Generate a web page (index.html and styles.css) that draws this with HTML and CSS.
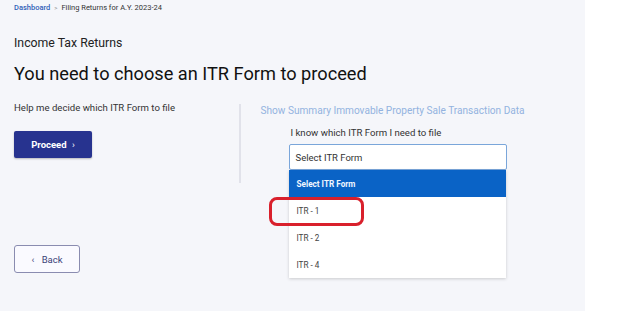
FILE: index.html
```html
<!DOCTYPE html>
<html>
<head>
<meta charset="utf-8">
<link rel="stylesheet" href="styles.css">
</head>
<body>
<div class="page">
  <div class="crumbs"><span class="crumb-link">Dashboard</span><span class="crumb-sep">&gt;</span><span class="crumb-cur">Filing Returns for A.Y. 2023-24</span></div>
  <div class="subtitle">Income Tax Returns</div>
  <h1 class="title">You need to choose an ITR Form to proceed</h1>
  <div class="cols">
    <div class="col-left">
      <div class="help">Help me decide which ITR Form to file</div>
      <button class="btn-primary">Proceed <span class="chev">›</span></button>
    </div>
    <div class="divider"></div>
    <div class="col-right">
      <div class="summary-link">Show Summary Immovable Property Sale Transaction Data</div>
      <div class="select-wrap">
        <div class="know">I know which ITR Form I need to file</div>
        <div class="select">Select ITR Form</div>
        <div class="menu">
          <div class="opt active">Select ITR Form</div>
          <div class="opt">ITR - 1</div>
          <div class="opt">ITR - 2</div>
          <div class="opt">ITR - 4</div>
          <div class="mark"></div>
        </div>
      </div>
    </div>
  </div>
  <button class="btn-back"><span class="chev-back">‹</span> Back</button>
</div>
</body>
</html>
```
FILE: styles.css
```css
html, body {
  margin: 0;
  padding: 0;
  background: #ffffff;
  font-family: Roboto, "Liberation Sans", sans-serif;
}
.page {
  width: 585px;
  height: 311px;
  box-sizing: border-box;
  background: #f5f6fa;
  padding: 3px 14px 0 14px;
  position: relative;
}
.crumbs {
  font-size: 7.5px;
  line-height: 9px;
  color: #333;
  display: flex;
  align-items: center;
  gap: 4px;
}
.crumb-link { color: #2f5fb8; font-weight: 500; }
.crumb-sep { color: #888; font-size: 6px; }
.subtitle {
  margin-top: 23px;
  font-size: 12.3px;
  line-height: 16px;
  color: #222;
}
.title {
  margin: 11px 0 0 0;
  font-size: 18.2px;
  line-height: 24px;
  font-weight: 400;
  color: #111;
}
.cols {
  display: flex;
  margin-top: 15px;
}
.col-left {
  width: 225px;
  padding-top: 1px;
  display: flex;
  flex-direction: column;
  align-items: flex-start;
}
.help {
  font-size: 9.6px;
  line-height: 12px;
  color: #333;
}
.btn-primary {
  margin-top: 17px;
  width: 78px;
  height: 27px;
  border: none;
  border-radius: 2px;
  background: #27338f;
  color: #fff;
  font-family: inherit;
  font-size: 9.5px;
  font-weight: 700;
  box-shadow: 0 1px 2px rgba(0,0,0,0.25);
  padding: 0;
}
.chev { font-weight: 400; margin-left: 3px; }
.divider {
  width: 1.5px;
  height: 79px;
  background: #e1e2ea;
  margin-top: 3px;
}
.col-right {
  padding-left: 20px;
  padding-top: 4px;
}
.summary-link {
  font-size: 10.1px;
  line-height: 12px;
  color: #93b3e0;
}
.select-wrap {
  margin-left: 28px;
  margin-top: 10px;
  width: 218px;
  position: relative;
}
.know {
  font-size: 9.6px;
  line-height: 12px;
  color: #333;
  margin-left: 2px;
}
.select {
  margin-top: 5px;
  height: 26px;
  box-sizing: border-box;
  border: 1px solid #7aa6da;
  border-radius: 2px;
  background: #fff;
  font-size: 9.5px;
  color: #333;
  display: flex;
  align-items: center;
  padding-left: 6px;
}
.menu {
  position: absolute;
  left: 0;
  top: 43px;
  width: 217px;
  background: #fff;
  box-shadow: 0 1px 3px rgba(0,0,0,0.18);
}
.opt {
  height: 27px;
  display: flex;
  align-items: center;
  padding-left: 8px;
  font-size: 8.2px;
  color: #444;
}
.opt.active {
  background: #0a63c6;
  color: #f0f6ff;
  font-weight: 700;
}
.mark {
  position: absolute;
  left: -20px;
  top: 27px;
  width: 95px;
  height: 29px;
  box-sizing: border-box;
  border: 3px solid #d9202c;
  border-radius: 8px;
}
.btn-back {
  position: absolute;
  left: 14px;
  top: 245px;
  width: 66px;
  height: 28px;
  background: #fafaff;
  border: 1px solid #8a8cb0;
  border-radius: 3px;
  color: #3a3f78;
  font-family: inherit;
  font-size: 9.5px;
  padding: 0;
}
.chev-back { margin-right: 5px; }
```
